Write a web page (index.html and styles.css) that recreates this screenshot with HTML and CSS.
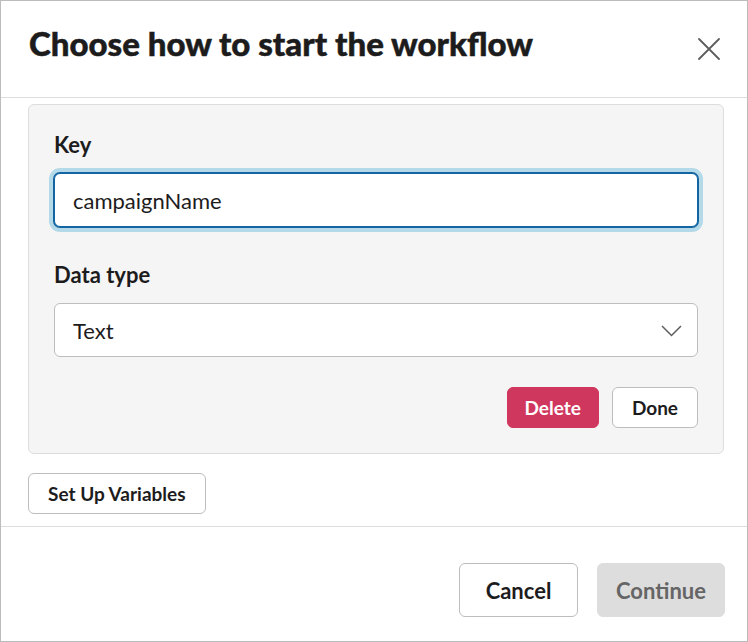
FILE: index.html
```html
<!DOCTYPE html>
<html lang="en">
<head>
  <meta charset="UTF-8" />
  <meta name="viewport" content="width=device-width, initial-scale=1" />
  <title>Choose how to start the workflow</title>
  <link rel="stylesheet" href="styles.css">
</head>
<body>
  <div class="modal">
    <div class="modal-header">
      <h1 class="modal-title">Choose how to start the workflow</h1>
      <button class="close-btn" aria-label="Close">
        <svg width="22" height="22" viewBox="0 0 22 22">
          <path d="M1 1 L21 21 M21 1 L1 21" stroke="#5e5d5e" stroke-width="1.8" stroke-linecap="round" fill="none"/>
        </svg>
      </button>
    </div>

    <div class="modal-body">
      <div class="variable-card">
        <label class="field-label" for="key">Key</label>
        <input class="text-input" id="key" type="text" value="campaignName">

        <div class="field-label second">Data type</div>
        <div class="select-box">
          <span>Text</span>
          <svg width="21" height="12" viewBox="0 0 21 12">
            <path d="M1 1 L10.5 10.5 L20 1" stroke="#5e5d5e" stroke-width="1.5" fill="none"/>
          </svg>
        </div>

        <div class="card-actions">
          <button class="btn btn-danger">Delete</button>
          <button class="btn btn-done">Done</button>
        </div>
      </div>

      <button class="btn setup-btn">Set Up Variables</button>
    </div>

    <div class="modal-footer">
      <button class="btn btn-lg btn-cancel">Cancel</button>
      <button class="btn btn-lg btn-disabled" disabled>Continue</button>
    </div>
  </div>
</body>
</html>
```

FILE: styles.css
```css
* {
  box-sizing: border-box;
}
body {
  margin: 0;
  font-family: Lato, "Open Sans", sans-serif;
  color: #1d1c1d;
  background: #fff;
}
.modal {
  width: 748px;
  height: 642px;
  border: 1px solid #bcbcbc;
  display: flex;
  flex-direction: column;
  overflow: hidden;
}

.modal-header {
  height: 97px;
  flex-shrink: 0;
  display: flex;
  justify-content: space-between;
  align-items: flex-start;
  padding: 23px 27px 0 28px;
  border-bottom: 1px solid #dddddd;
}
.modal-title {
  margin: 0;
  font-size: 33px;
  font-weight: 900;
  line-height: 1.2;
  -webkit-text-stroke: 0.5px #1d1c1d;
}
.close-btn {
  border: none;
  background: none;
  padding: 0;
  margin-top: 14px;
  cursor: pointer;
  display: flex;
}

.modal-body {
  flex: 1;
  padding: 6px 23px 0 27px;
}
.variable-card {
  background: #f5f5f5;
  border: 1px solid #dddddd;
  border-radius: 6px;
  padding: 27px 25px 25px 25px;
}
.field-label {
  display: block;
  font-size: 22px;
  font-weight: 700;
  line-height: 26px;
  margin-bottom: 15px;
}
.field-label.second {
  margin-top: 35px;
}
.text-input {
  display: block;
  width: 100%;
  height: 54px;
  font-family: inherit;
  font-size: 22px;
  color: #1d1c1d;
  padding: 0 18px;
  background: #fff;
  border: 1px solid #1264a3;
  border-radius: 6px;
  box-shadow: 0 0 0 1px #1264a3, 0 0 0 5px rgba(29, 155, 209, 0.3);
  outline: none;
}
.select-box {
  height: 54px;
  display: flex;
  align-items: center;
  justify-content: space-between;
  padding: 0 15px 0 18px;
  background: #fff;
  border: 1px solid #bdbdbd;
  border-radius: 6px;
  font-size: 22px;
}
.select-box svg {
  margin-top: 1px;
}

.card-actions {
  display: flex;
  justify-content: flex-end;
  gap: 13px;
  margin-top: 30px;
}

.btn {
  font-family: inherit;
  font-size: 19px;
  font-weight: 700;
  color: #1d1c1d;
  height: 41px;
  padding: 0 18px;
  background: #fff;
  border: 1px solid #bdbdbd;
  border-radius: 6px;
  cursor: pointer;
}
.btn-danger {
  background: #d0375e;
  border-color: #d0375e;
  color: #fff;
  padding: 0 17px;
}
.btn-done {
  padding: 0 19px;
}
.setup-btn {
  margin-top: 19px;
  padding: 0 19px;
}

.modal-footer {
  flex-shrink: 0;
  height: 115px;
  border-top: 1px solid #dddddd;
  display: flex;
  justify-content: flex-end;
  align-items: flex-start;
  gap: 19px;
  padding: 36px 22px 0 0;
}
.btn-lg {
  height: 54px;
  font-size: 22px;
  padding: 0;
  width: 128px;
}
.btn-lg.btn-cancel {
  width: 119px;
}
.btn-disabled {
  background: #dddddd;
  border-color: #dddddd;
  color: #666566;
  cursor: default;
}
```
